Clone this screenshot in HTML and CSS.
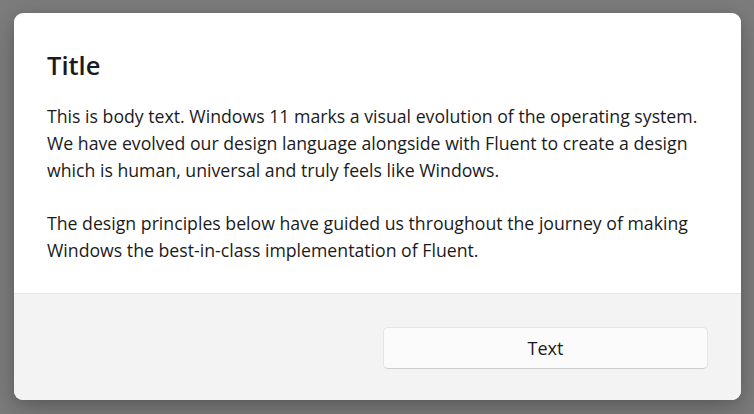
FILE: index.html
```html
<!DOCTYPE html>
<html lang="en">
<head>
    <meta charset="UTF-8">
    <title>Dialog</title>
    <link rel="stylesheet" href="styles.css">
</head>
<body>
    <div class="dialog">
        <div class="dialog-content">
            <h1 class="dialog-title">Title</h1>
            <p class="dialog-body">This is body text. Windows 11 marks a visual evolution of the operating system.<br>We have evolved our design language alongside with Fluent to create a design<br>which is human, universal and truly feels like Windows.</p>
            <p class="dialog-body">The design principles below have guided us throughout the journey of making<br>Windows the best-in-class implementation of Fluent.</p>
        </div>
        <div class="dialog-footer">
            <span></span>
            <button class="btn">Text</button>
        </div>
    </div>
</body>
</html>
```

FILE: styles.css
```css
html, body {
    margin: 0;
    height: 100%;
}
body {
    background-color: #7c7c7c;
    padding: 13px 13px 0 14px;
    box-sizing: border-box;
    font-family: "Open Sans", "Noto Sans", sans-serif;
    color: #1b1b1b;
}
.dialog {
    width: 727px;
    height: 387px;
    display: flex;
    flex-direction: column;
    background-color: #ffffff;
    border-radius: 9px;
    overflow: hidden;
    box-shadow: 0 10px 30px rgba(0, 0, 0, 0.22), 0 2px 8px rgba(0, 0, 0, 0.1);
}
.dialog-content {
    flex: 1;
    padding: 34px 33px 0 33px;
}
.dialog-title {
    margin: 0 0 20px 0;
    font-size: 25.5px;
    font-weight: 600;
    line-height: 36px;
}
.dialog-body {
    margin: 0 0 27px 0;
    font-size: 17.7px;
    line-height: 26.8px;
    white-space: nowrap;
}
.dialog-footer {
    height: 107px;
    box-sizing: border-box;
    border-top: 1px solid #e5e5e5;
    background-color: #f3f3f3;
    padding: 33px 33px 0 33px;
    display: grid;
    grid-template-columns: 1fr 1fr;
    column-gap: 11px;
    align-items: start;
}
.btn {
    height: 42px;
    border: 1px solid #e5e5e5;
    border-bottom-color: #cccccc;
    border-radius: 5px;
    background-color: #fbfbfb;
    font-family: inherit;
    font-size: 18px;
    color: #1b1b1b;
}
```
